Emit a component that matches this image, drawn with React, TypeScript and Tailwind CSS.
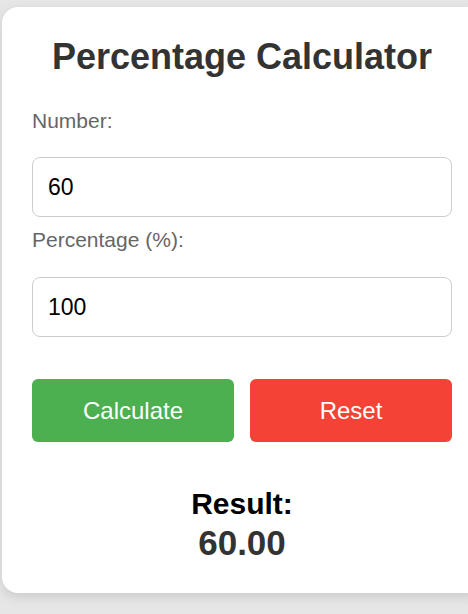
import { useState } from "react";

export default function App() {
  const [num, setNum] = useState("60");
  const [pct, setPct] = useState("100");
  const [result, setResult] = useState<string | null>("60.00");

  const calculate = () => {
    const n = parseFloat(num);
    const p = parseFloat(pct);
    if (isNaN(n) || isNaN(p)) {
      setResult(null);
      return;
    }
    setResult(((n * p) / 100).toFixed(2));
  };

  const reset = () => {
    setNum("");
    setPct("");
    setResult(null);
  };

  return (
    <div className="min-h-[614px] w-full overflow-hidden bg-[#e6e6e6] pt-[7px] pl-[2px] font-['Liberation_Sans',Arial,sans-serif]">
      <div className="w-[480px] rounded-[16px] bg-white p-[30px] shadow-[0_4px_12px_rgba(0,0,0,0.12)]">
        <h1 className="text-center text-[36px] font-bold leading-[40px] text-[#333]">
          Percentage Calculator
        </h1>

        <label className="mt-[32px] block text-[21px] leading-[24px] text-[#666]">Number:</label>
        <input
          type="text"
          value={num}
          onChange={(e) => setNum(e.target.value)}
          className="mt-[24px] block h-[60px] w-full rounded-[8px] border border-[#ccc] px-[15px] text-[23px] text-black outline-none"
        />

        <label className="mt-[11px] block text-[21px] leading-[24px] text-[#666]">Percentage (%):</label>
        <input
          type="text"
          value={pct}
          onChange={(e) => setPct(e.target.value)}
          className="mt-[25px] block h-[60px] w-full rounded-[8px] border border-[#ccc] px-[15px] text-[23px] text-black outline-none"
        />

        <div className="mt-[42px] flex gap-[16px]">
          <button
            onClick={calculate}
            className="h-[63px] flex-1 rounded-[6px] bg-[#4caf50] text-[24px] text-white"
          >
            Calculate
          </button>
          <button
            onClick={reset}
            className="h-[63px] flex-1 rounded-[6px] bg-[#f44336] text-[24px] text-white"
          >
            Reset
          </button>
        </div>

        <div className="mt-[45px] text-center">
          <div className="text-[30px] font-bold leading-[34px] text-black">Result:</div>
          <div className="mt-[2px] h-[40px] text-[35px] font-bold leading-[40px] text-[#333]">
            {result ?? ""}
          </div>
        </div>
      </div>
    </div>
  );
}
